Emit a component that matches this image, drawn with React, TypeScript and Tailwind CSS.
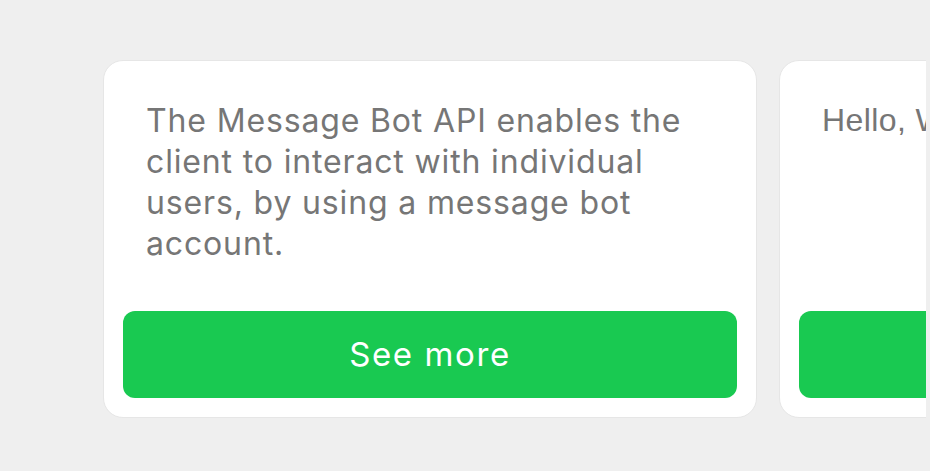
const cards = [
  {
    text: 'The Message Bot API enables the client to interact with individual users, by using a message bot account.',
    font: "font-['Inter','Noto_Sans',sans-serif] tracking-[0.85px]",
  },
  {
    text: 'Hello, World!',
    font: "font-['Liberation_Sans',Arial,sans-serif] tracking-[0.4px]",
  },
];

function Card({ text, font }: { text: string; font: string }) {
  return (
    <div className="flex h-[358px] w-[654px] shrink-0 flex-col rounded-[20px] border border-[#e6e6e6] bg-white px-[19px] pb-[19px]">
      <p className={`pl-[23px] pr-[22px] pt-[39px] text-[32px] leading-[41px] text-[#767676] ${font}`}>
        {text}
      </p>
      <button className="mt-auto flex h-[87px] w-full items-center justify-center rounded-[12px] bg-[#19c951] font-['Inter','Noto_Sans',sans-serif] text-[33px] tracking-[1.6px] text-white">
        See more
      </button>
    </div>
  );
}

export default function App() {
  return (
    <div className="h-[471px] w-[930px] bg-[#efefef]">
      <div className="flex h-full w-[926px] gap-[22px] overflow-hidden pl-[103px] pt-[60px]">
        {cards.map((c, i) => (
          <Card key={i} text={c.text} font={c.font} />
        ))}
      </div>
    </div>
  );
}
